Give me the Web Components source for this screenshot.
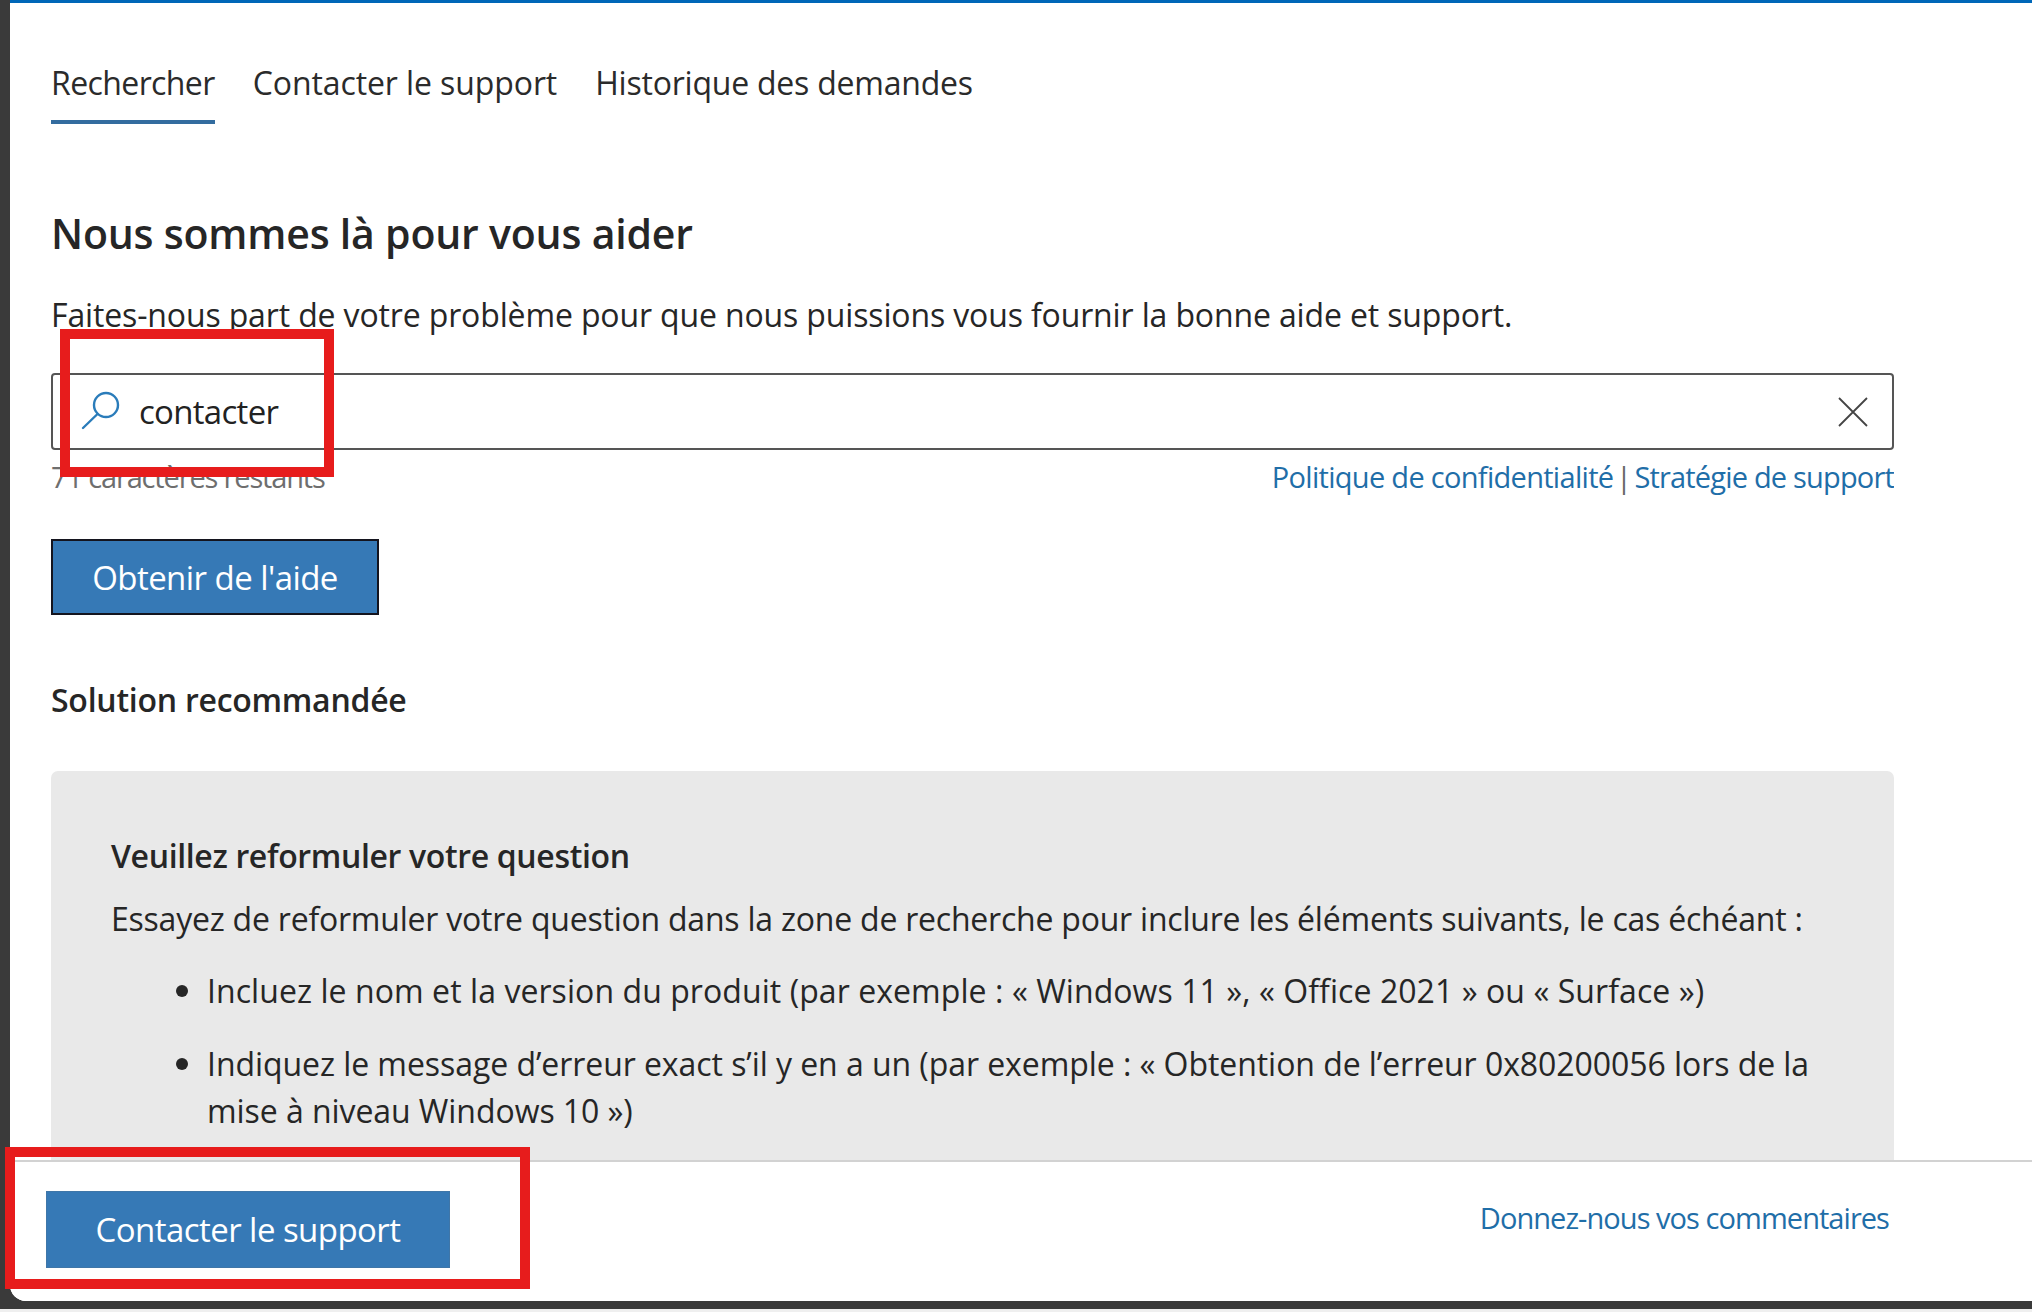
<!DOCTYPE html>
<html lang="fr"><head><meta charset="utf-8"><title>Aide</title>
<style>
html,body{margin:0;height:1312px;overflow:hidden;background:#efefef}
body{font-family:"Open Sans","Noto Sans",sans-serif;color:#262626}
</style></head><body>
<help-app>
  <help-tabs slot="tabs"></help-tabs>
  <h-text slot="main" kind="h1">Nous sommes là pour vous aider</h-text>
  <h-text slot="main" kind="sub">Faites-nous part de votre problème pour que nous puissions vous fournir la bonne aide et support.</h-text>
  <search-box slot="main" value="contacter"></search-box>
  <search-meta slot="main"></search-meta>
  <help-button slot="main" variant="outlined" style="margin-top:44px;width:328px;height:76px">Obtenir de l'aide</help-button>
  <h-text slot="main" kind="h2">Solution recommandée</h-text>
  <solution-panel slot="main"></solution-panel>
  <help-footer slot="footer"></help-footer>
  <red-mark slot="marks" style="left:60px;top:329px;width:274px;height:148px"></red-mark>
  <red-mark slot="marks" style="left:5px;top:1147px;width:525px;height:142px"></red-mark>
</help-app>
<script>
function def(name, html, init){
  customElements.define(name, class extends HTMLElement{
    constructor(){super();this.attachShadow({mode:'open'}).innerHTML=html;}
    connectedCallback(){ if(init) init(this); }
  });
}
def('help-app',`<style>
:host{display:flex;flex-direction:column;position:relative;width:2032px;height:1309px;box-sizing:border-box;background:#3a3a3a;padding:0 0 8px 10px}
.page{flex:1;min-height:0;display:flex;flex-direction:column;background:#3a3a3a;margin-left:0;position:relative}
.bar{flex:none;height:3px;background:#0067b8}
.sheet{flex:1;min-height:0;display:flex;flex-direction:column;background:#fff;border-bottom-left-radius:16px;overflow:hidden}
.main{flex:1;min-height:0;overflow:hidden;padding-left:41px;width:1843px;display:flex;flex-direction:column;align-items:stretch}
</style>
<div class="page"><div class="bar"></div><div class="sheet">
<div class="main"><slot name="tabs"></slot><slot name="main"></slot></div>
<slot name="footer"></slot></div></div><slot name="marks"></slot>`);
def('help-tabs',`<style>
:host{display:flex;gap:38px;padding-top:56px;flex:none;font-size:32px}
a{display:block;line-height:48px;padding-bottom:13px;border-bottom:4px solid transparent;color:#2b2b2b}
a.on{border-bottom-color:#336c9f}
</style><a class="on" style="letter-spacing:-.6px">Rechercher</a><a style="letter-spacing:-.1px">Contacter le support</a><a style="letter-spacing:-.22px">Historique des demandes</a>`);
def('h-text',`<style>
:host{display:block;flex:none}
:host([kind=h1]){font-size:41px;font-weight:600;line-height:56px;margin-top:81px;letter-spacing:-.2px}
:host([kind=sub]){font-size:32px;line-height:48px;margin-top:30px;letter-spacing:-.14px}
:host([kind=h2]){font-size:32px;font-weight:600;line-height:48px;margin-top:61px;letter-spacing:-.25px}
</style><slot></slot>`);
def('search-box',`<style>
:host{display:flex;flex:none;align-items:center;box-sizing:border-box;height:77px;margin-top:34px;border:2px solid #555;border-radius:4px;padding:0 24px 0 27px;background:#fff}
svg{flex:none}
.v{flex:1;margin-left:17px;font-size:33px;letter-spacing:-.7px;line-height:48px;color:#222}
</style>
<svg width="42" height="42" viewBox="0 0 42 42" fill="none" stroke="#2a7cba" stroke-width="2.4" stroke-linecap="round"><circle cx="26" cy="14" r="12"/><path d="M17.500 23 L3 37"/></svg>
<span class="v"></span>
<svg width="30" height="30" viewBox="0 0 30 30" fill="none" stroke="#444" stroke-width="1.8"><path d="M1 1 L29 29 M29 1 L1 29"/></svg>`,
el=>{el.shadowRoot.querySelector('.v').textContent=el.getAttribute('value')});
def('search-meta',`<style>
:host{display:flex;flex:none;justify-content:space-between;margin-top:9px;line-height:36px;font-size:29px;color:#6e6e6e}
a{color:#1f6ea8}
a.p{letter-spacing:-.7px}
a.s{letter-spacing:-.82px}
.sep{color:#666;margin:0 -5px}
.count{letter-spacing:-1.15px}
</style><span class="count">71 caractères restants</span><span><a class="p">Politique de confidentialité</a> <span class="sep">|</span> <a class="s">Stratégie de support</a></span>`);
def('help-button',`<style>
:host{display:flex;flex:none;align-items:center;justify-content:center;box-sizing:border-box;background:#3679b6;color:#fff;font-size:33px;letter-spacing:-.55px;align-self:flex-start}
:host([variant=outlined]){border:2px solid #14141e}
:host([variant=flat]){border:1px solid #3f76a8}
</style><slot></slot>`);
def('solution-panel',`<style>
:host{display:block;flex:none;margin-top:47px;background:#e9e9e9;border-radius:7px 7px 0 0;padding:61px 51px 60px 60px;font-size:32px;line-height:47px;color:#262626;width:1843px;box-sizing:border-box}
h3{margin:0;font-size:32px;font-weight:600;line-height:48px;letter-spacing:-.35px}
p{margin:15px 0 0;line-height:48px;letter-spacing:-.22px}
ul{margin:24px 0 0;padding:0 0 0 96px}
li:first-child{letter-spacing:.07px}
li+li{margin-top:26px;letter-spacing:-.06px}
li::marker{font-size:34px}
</style><h3>Veuillez reformuler votre question</h3>
<p>Essayez de reformuler votre question dans la zone de recherche pour inclure les éléments suivants, le cas échéant :</p>
<ul><li>Incluez le nom et la version du produit (par exemple : « Windows 11 », « Office 2021 » ou « Surface »)</li>
<li>Indiquez le message d’erreur exact s’il y en a un (par exemple : « Obtention de l’erreur 0x80200056 lors de la mise à niveau Windows 10 »)</li></ul>`);
def('help-footer',`<style>
:host{display:flex;flex:none;justify-content:space-between;align-items:flex-start;box-sizing:border-box;height:141px;border-top:2px solid #d2d2d2;padding:29px 143px 0 36px;background:#fff}
a{font-size:29px;line-height:36px;margin-top:9px;letter-spacing:-.95px;color:#1f6ea8}
</style><help-button variant="flat" style="width:404px;height:77px">Contacter le support</help-button><a>Donnez-nous vos commentaires</a>`);
def('red-mark',`<style>
:host{display:block;position:absolute;box-sizing:border-box;border:10px solid #e71c1c;pointer-events:none}
</style>`);
</script>
</body></html>
